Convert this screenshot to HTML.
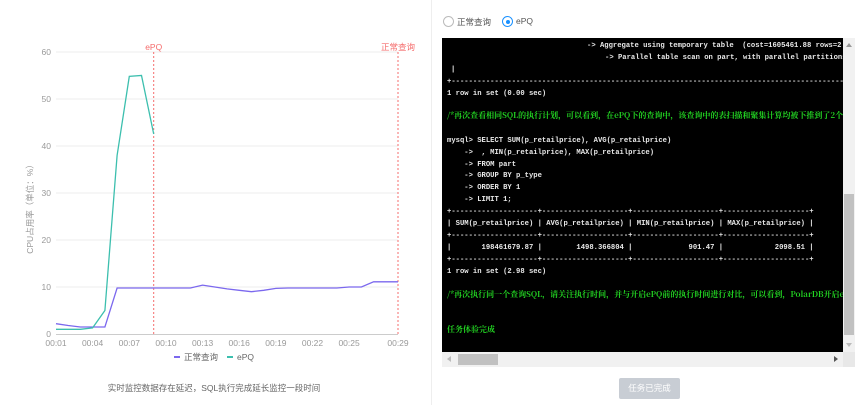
<!DOCTYPE html>
<html><head><meta charset="utf-8"><style>
body{margin:0;width:865px;height:405px;background:#fff;position:relative;overflow:hidden;font-family:"Liberation Sans","Noto Sans CJK SC",sans-serif}
.t{position:absolute;left:0;white-space:pre;font:bold 7.2px "Liberation Mono","Noto Sans CJK SC",monospace;color:#e8e8e8;line-height:10px}
.g{color:#22d422;font-family:"Noto Serif CJK SC","Liberation Mono",serif;font-size:8px;font-weight:bold}
</style></head><body>
<svg width="432" height="405" style="position:absolute;left:0;top:0" font-family="Liberation Sans, Noto Sans CJK SC, sans-serif">
<g stroke="#eee" stroke-width="1">
<line x1="56" x2="398" y1="52" y2="52"/><line x1="56" x2="398" y1="99" y2="99"/><line x1="56" x2="398" y1="146" y2="146"/><line x1="56" x2="398" y1="193" y2="193"/><line x1="56" x2="398" y1="240" y2="240"/><line x1="56" x2="398" y1="287" y2="287"/></g>
<line x1="56" x2="398" y1="334.5" y2="334.5" stroke="#ccc"/>
<g fill="#999" font-size="8.5" text-anchor="end"><text x="51" y="55">60</text><text x="51" y="102">50</text><text x="51" y="149">40</text><text x="51" y="196">30</text><text x="51" y="243">20</text><text x="51" y="290">10</text><text x="51" y="337">0</text></g>
<g fill="#999" font-size="8.5" text-anchor="middle"><text x="56" y="346">00:01</text><text x="92.6" y="346">00:04</text><text x="129.3" y="346">00:07</text><text x="166" y="346">00:10</text><text x="202.6" y="346">00:13</text><text x="239.2" y="346">00:16</text><text x="275.9" y="346">00:19</text><text x="312.5" y="346">00:22</text><text x="349.1" y="346">00:25</text><text x="398" y="346">00:29</text></g>
<text transform="translate(33,207) rotate(-90)" fill="#999" font-size="8.5" text-anchor="middle">CPU占用率（单位：%）</text>
<line x1="153.7" x2="153.7" y1="52" y2="334" stroke="#f56c6c" stroke-dasharray="2,2"/>
<line x1="398" x2="398" y1="52" y2="334" stroke="#f56c6c" stroke-dasharray="2,2"/>
<text x="153.7" y="50" fill="#f56c6c" font-size="8.5" text-anchor="middle">ePQ</text>
<text x="398" y="50" fill="#f56c6c" font-size="8.5" text-anchor="middle">正常查询</text>
<polyline fill="none" stroke="#7b68ee" stroke-width="1.3" points="56,323.7 68.2,325.5 80.4,327 92.6,327 104.9,327 117.1,288 129.3,288 141.5,288 153.7,288 165.9,288 178.1,288 190.4,288 202.6,285.1 214.8,287 227,288.9 239.2,290.3 251.4,291.7 263.7,290.3 275.9,288.4 288.1,288 336.9,288 349.1,287 361.4,287 373.6,281.8 385.8,281.8 398,281.8"/>
<polyline fill="none" stroke="#3cbfae" stroke-width="1.3" points="56,329.3 68.2,329.3 80.4,329.3 92.6,327.9 104.9,310.5 117.1,155.4 129.3,76.4 141.5,75.5 153.7,134"/>
<line x1="174" x2="180" y1="357" y2="357" stroke="#7b68ee" stroke-width="2"/><text x="184" y="360" fill="#666" font-size="8.5">正常查询</text>
<line x1="227" x2="233" y1="357" y2="357" stroke="#3cbfae" stroke-width="2"/><text x="237" y="360" fill="#666" font-size="8.5">ePQ</text>
<text x="214" y="391" fill="#666" font-size="8.5" text-anchor="middle">实时监控数据存在延迟，SQL执行完成延长监控一段时间</text>
</svg>
<div style="position:absolute;left:431px;top:0;width:1px;height:405px;background:#eee"></div>
<div style="position:absolute;left:443px;top:16px;width:9px;height:9px;border:1px solid #bbb;border-radius:50%"></div>
<div style="position:absolute;left:457px;top:16px;font-size:8.5px;color:#555">正常查询</div>
<div style="position:absolute;left:502px;top:16px;width:9px;height:9px;border:1px solid #1890ff;border-radius:50%"><div style="position:absolute;left:2.5px;top:2.5px;width:4px;height:4px;background:#1890ff;border-radius:50%"></div></div>
<div style="position:absolute;left:516px;top:16px;font-size:8.5px;color:#555">ePQ</div>
<div style="position:absolute;left:442px;top:38px;width:401px;height:314px;background:#000;overflow:hidden">
<div class="t" style="top:3px;left:145px">-> Aggregate using temporary table  (cost=1605461.88 rows=2</div>
<div class="t" style="top:15px;left:163px">-> Parallel table scan on part, with parallel partitions</div>
<div class="t" style="top:27px;left:9px">|</div>
<div class="t" style="top:39px;left:5px">+-----------------------------------------------------------------------------------------------</div>
<div class="t" style="top:51px;left:5px">1 row in set (0.00 sec)</div>
<div class="t g" style="top:73px;left:5px">/*再次查看相同SQL的执行计划，可以看到，在ePQ下的查询中，该查询中的表扫描和聚集计算均被下推到了2个</div>
<div class="t" style="top:98px;left:5px">mysql> SELECT SUM(p_retailprice), AVG(p_retailprice)</div>
<div class="t" style="top:110px;left:5px">    ->  , MIN(p_retailprice), MAX(p_retailprice)</div>
<div class="t" style="top:122px;left:5px">    -> FROM part</div>
<div class="t" style="top:133px;left:5px">    -> GROUP BY p_type</div>
<div class="t" style="top:145px;left:5px">    -> ORDER BY 1</div>
<div class="t" style="top:157px;left:5px">    -> LIMIT 1;</div>
<div class="t" style="top:169px;left:5px">+--------------------+--------------------+--------------------+--------------------+</div>
<div class="t" style="top:181px;left:5px">| SUM(p_retailprice) | AVG(p_retailprice) | MIN(p_retailprice) | MAX(p_retailprice) |</div>
<div class="t" style="top:193px;left:5px">+--------------------+--------------------+--------------------+--------------------+</div>
<div class="t" style="top:205px;left:5px">|       198461679.87 |        1498.366804 |             901.47 |            2098.51 |</div>
<div class="t" style="top:217px;left:5px">+--------------------+--------------------+--------------------+--------------------+</div>
<div class="t" style="top:229px;left:5px">1 row in set (2.98 sec)</div>
<div class="t g" style="top:252px;left:5px">/*再次执行同一个查询SQL，请关注执行时间，并与开启ePQ前的执行时间进行对比，可以看到，PolarDB开启ePQ</div>
<div class="t g" style="top:287px;left:5px">任务体验完成</div>
</div>
<div style="position:absolute;left:843px;top:38px;width:12px;height:314px;background:#f1f1f1"><div style="position:absolute;left:1px;top:156px;width:10px;height:141px;background:#c1c1c1"></div>
<div style="position:absolute;left:3px;top:5px;border:3px solid transparent;border-bottom:4px solid #999;border-top:0"></div>
<div style="position:absolute;left:3px;bottom:5px;border:3px solid transparent;border-top:4px solid #bbb;border-bottom:0"></div></div>
<div style="position:absolute;left:442px;top:352px;width:401px;height:15px;background:#f1f1f1"><div style="position:absolute;left:16px;top:2px;width:40px;height:11px;background:#c1c1c1"></div>
<div style="position:absolute;left:5px;top:4px;border:3px solid transparent;border-right:4px solid #bbb;border-left:0"></div>
<div style="position:absolute;right:5px;top:4px;border:3px solid transparent;border-left:4px solid #555;border-right:0"></div></div>
<div style="position:absolute;left:843px;top:352px;width:12px;height:15px;background:#e8e8e8"></div>
<div style="position:absolute;left:619px;top:378px;width:61px;height:21px;background:#c8cdd4;color:#fff;font-size:8.5px;line-height:21px;text-align:center;border-radius:2px">任务已完成</div>
</body></html>
